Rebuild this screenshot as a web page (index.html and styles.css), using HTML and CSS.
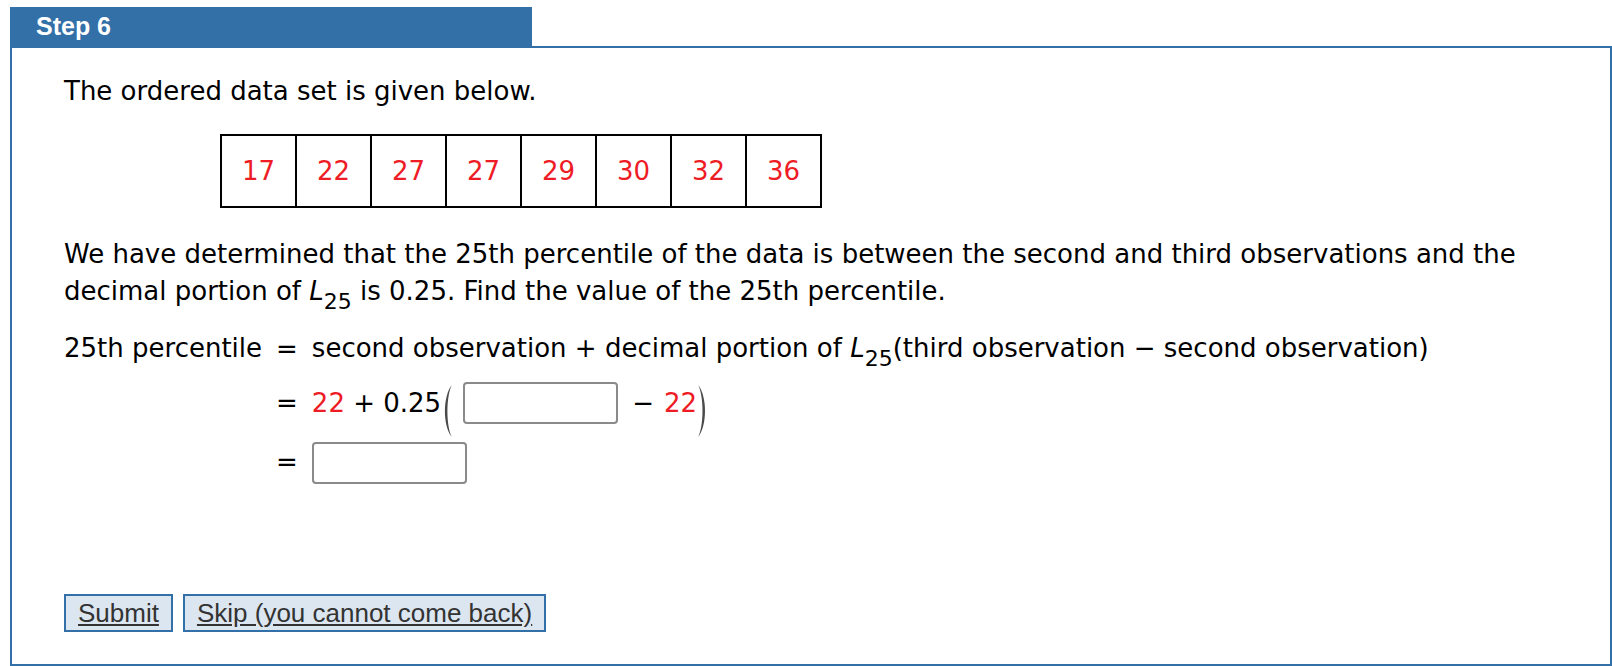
FILE: index.html
```html
<!DOCTYPE html>
<html lang="en">
<head>
    <meta charset="UTF-8">
    <title>Step 6</title>
    <link rel="stylesheet" href="styles.css">
</head>
<body>
    <div class="step">
        <div class="step-tab">Step 6</div>
        <div class="step-body">
            <p class="lead">The ordered data set is given below.</p>
            <table class="data-set">
                <tr>
                    <td>17</td><td>22</td><td>27</td><td>27</td><td>29</td><td>30</td><td>32</td><td>36</td>
                </tr>
            </table>
            <p class="prompt">We have determined that the 25th percentile of the data is between the second and third observations and the decimal portion of <i class="var">L</i><sub>25</sub> is 0.25. Find the value of the 25th percentile.</p>
            <!-- worked equation -->
            <div class="equation">
                <div class="eq-label">25th percentile</div>
                <div class="eq-sign">=</div>
                <div class="eq-text">second observation + decimal portion of <i class="var">L</i><sub>25</sub>(third observation &minus; second observation)</div>

                <div class="eq-label"></div>
                <div class="eq-sign">=</div>
                <div class="eq-rhs">
                    <span class="given">22</span>&nbsp;+ 0.25<svg class="paren paren-open" viewBox="0 0 12 56"><path d="M11 1 C1.5 13, 1.5 43, 11 55 C5 43, 5 13, 11 1 Z"/></svg>
                    <input class="answer" type="text">
                    <span class="minus">&minus;</span><span class="given">22</span><svg class="paren" viewBox="0 0 12 56"><path d="M1 1 C10.5 13, 10.5 43, 1 55 C7 43, 7 13, 1 1 Z"/></svg>
                </div>

                <div class="eq-label"></div>
                <div class="eq-sign">=</div>
                <div class="eq-rhs eq-last"><input class="answer" type="text"></div>
            </div>
            <div class="actions">
                <button class="btn">Submit</button>
                <button class="btn">Skip (you cannot come back)</button>
            </div>
        </div>
    </div>
</body>
</html>
```

FILE: styles.css
```css
body {
    margin: 0;
    padding: 0;
    background-color: #fff;
    font-family: Verdana, "DejaVu Sans", sans-serif;
    font-size: 26px;
    color: #000;
}
.step {
    margin: 7px 0 0 10px;
}
.step-tab {
    width: 496px;
    height: 39px;
    padding-left: 26px;
    background-color: #3370a8;
    color: #fff;
    font-family: "Liberation Sans", Arial, sans-serif;
    font-weight: bold;
    font-size: 25px;
    line-height: 38px;
}
.step-body {
    box-sizing: border-box;
    height: 620px;
    border: 2px solid #3370a8;
    padding: 25px 30px 0 52px;
}
.lead {
    margin: 0;
    line-height: 36px;
}
.data-set {
    border-collapse: collapse;
    margin: 25px 0 0 156px;
}
.data-set td {
    width: 73px;
    height: 70px;
    padding: 0;
    border: 2px solid #000;
    text-align: center;
    color: #ee1c25;
}
.prompt {
    margin: 28px 0 0;
    line-height: 37px;
}
.var {
    font-style: italic;
}
sub {
    font-size: 22px;
    line-height: 0;
    vertical-align: -9px;
}
.equation {
    display: grid;
    grid-template-columns: auto auto 1fr;
    row-gap: 15px;
    align-items: center;
    margin-top: 20px;
}
.eq-label {
    line-height: 37px;
}
.eq-sign {
    padding: 0 14px 0 14px;
}
.eq-text {
    line-height: 37px;
    white-space: nowrap;
}
.eq-rhs {
    display: flex;
    align-items: center;
    line-height: 37px;
    white-space: nowrap;
}
.eq-last {
    margin-top: 3px;
}
.given {
    color: #ee1c25;
}
.paren {
    flex: none;
    width: 12px;
    height: 54px;
    margin: -2px 0 -18px 0;
    fill: #4a4a4a;
}
.paren-open {
    margin-right: 10px;
}
.answer {
    box-sizing: border-box;
    width: 155px;
    height: 42px;
    margin: 0;
    border: 2px solid #8a8a8a;
    border-radius: 4px;
    background: #fff;
    font: inherit;
}
.minus {
    margin: 0 10px 0 14px;
}
.actions {
    display: flex;
    gap: 10px;
    margin-top: 110px;
}
.btn {
    padding: 2px 12px;
    border: 2px solid #3370a8;
    background-color: #dce6f0;
    color: #333;
    font-family: "Liberation Sans", Arial, sans-serif;
    font-size: 26px;
    line-height: 30px;
    text-decoration: underline;
}
```
